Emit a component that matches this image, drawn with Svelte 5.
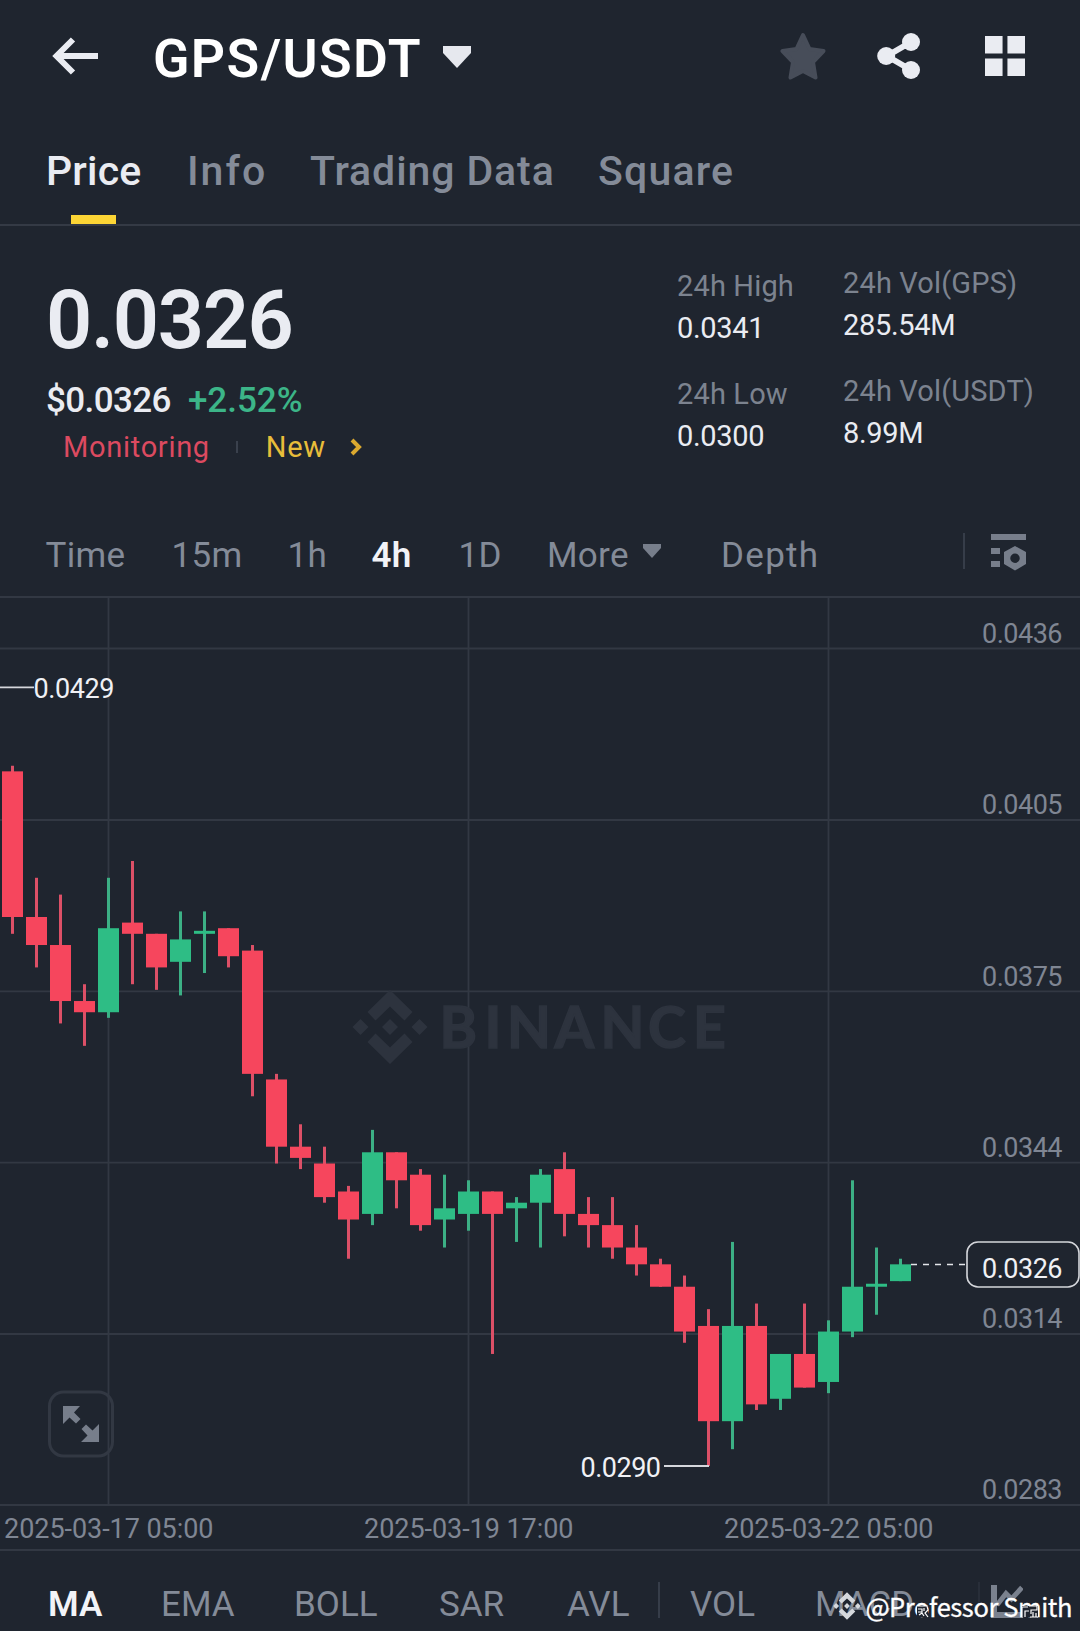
<script>
let activeTab = 'Price'
let activePeriod = '4h'
let activeIndicator = 'MA'

const tabs = ['Price', 'Info', 'Trading Data', 'Square']
const periods = ['Time', '15m', '1h', '4h', '1D']
const indicators = ['MA', 'EMA', 'BOLL', 'SAR', 'AVL']
const subIndicators = ['VOL', 'MACD']

const stats = [
    [
        { label: '24h High', value: '0.0341' },
        { label: '24h Low', value: '0.0300' }
    ],
    [
        { label: '24h Vol(GPS)', value: '285.54M' },
        { label: '24h Vol(USDT)', value: '8.99M' }
    ]
]

const gridRows = [
    { y: 50.5, label: '0.0436' },
    { y: 222, label: '0.0405' },
    { y: 393.3, label: '0.0375' },
    { y: 564.6, label: '0.0344' },
    { y: 736, label: '0.0314' },
    { y: 907, label: '0.0283' }
]

const gridCols = [
    { x: 108.5, label: '2025-03-17 05:00' },
    { x: 468.5, label: '2025-03-19 17:00' },
    { x: 828.5, label: '2025-03-22 05:00' }
]

// [open, high, low, close] in ticks of 0.0001
const candles = [
    [414, 415, 385, 388],
    [388, 395, 379, 383],
    [383, 392, 369, 373],
    [373, 376, 365, 371],
    [371, 395, 370, 386],
    [387, 398, 376, 385],
    [385, 385, 375, 379],
    [380, 389, 374, 384],
    [385, 389, 378, 385],
    [386, 386, 379, 381],
    [382, 383, 356, 360],
    [359, 360, 344, 347],
    [347, 351, 343, 345],
    [344, 347, 337, 338],
    [339, 340, 327, 334],
    [335, 350, 333, 346],
    [346, 346, 336, 341],
    [342, 343, 332, 333],
    [334, 342, 329, 336],
    [335, 341, 332, 339],
    [339, 339, 310, 335],
    [336, 338, 330, 337],
    [337, 343, 329, 342],
    [343, 346, 331, 335],
    [335, 338, 329, 333],
    [333, 338, 327, 329],
    [329, 333, 324, 326],
    [326, 327, 322, 322],
    [322, 324, 312, 314],
    [315, 318, 290, 298],
    [298, 330, 293, 315],
    [315, 319, 300, 301],
    [302, 310, 300, 310],
    [310, 319, 304, 304],
    [305, 316, 303, 314],
    [314, 341, 313, 322],
    [322, 329, 317, 322],
    [323, 327, 323, 326]
]

const yOf = (tick) => 868 - (tick - 290) * 5.602

const bars = candles.map(([open, high, low, close], i) => {
    const bottom = yOf(Math.min(open, close))
    const height = Math.max(3, bottom - yOf(Math.max(open, close)))
    return {
        x: 12.5 + i * 24,
        top: bottom - height,
        height,
        high: yOf(high),
        low: yOf(low),
        up: close >= open
    }
})
</script>

<style>
:global(body) {
    background: #1f252f;
}

.app {
    position: relative;
    width: 1080px;
    height: 1631px;
    overflow: hidden;
    background: #1f252f;
    color: #eaecf2;
    font-family: Roboto, 'Noto Sans', sans-serif;
}

svg {
    display: block;
    flex: none;
}

button {
    padding: 0;
    border: none;
    background: none;
    color: #848b98;
    font: inherit;
    letter-spacing: inherit;
    text-align: left;
    white-space: nowrap;
}

.header {
    box-sizing: border-box;
    height: 112px;
    padding: 0 55px 0 52px;
    display: flex;
    align-items: center;
}

h1 {
    margin: 0 0 0 54px;
    padding-top: 5px;
    color: #fff;
    font-size: 53.5px;
    font-weight: 600;
    line-height: 60px;
    letter-spacing: 1.4px;
}

.header .caret {
    margin: 2px 0 0 21px;
}

.actions {
    margin-left: auto;
    display: flex;
    align-items: center;
}

.tabs {
    box-sizing: border-box;
    height: 114px;
    padding: 6px 0 0 46px;
    display: grid;
    grid-template-columns: 141px 123px 288px auto;
    justify-content: start;
    border-bottom: 2px solid #343a45;
    font-size: 41px;
    font-weight: 500;
    letter-spacing: 0.9px;
}

.tabs button {
    position: relative;
}

.tabs button:nth-child(2) {
    letter-spacing: 2px;
}

.tabs button:last-child {
    letter-spacing: 1.2px;
}

.tabs button.active {
    color: #eaecf2;
    letter-spacing: 0.2px;
}

.tabs button.active::after {
    content: '';
    position: absolute;
    left: 25px;
    bottom: 0;
    width: 45px;
    height: 9px;
    background: #fcd535;
}

.summary {
    box-sizing: border-box;
    height: 286px;
    display: grid;
    grid-template-columns: 631px 166px auto;
    padding-left: 46px;
}

.last {
    margin-top: 50px;
    font-size: 81px;
    font-weight: 600;
    line-height: 90px;
    letter-spacing: -1.3px;
}

.fiat {
    margin-top: 15px;
    display: flex;
    gap: 17px;
    font-size: 35px;
    font-weight: 500;
    line-height: 40px;
    letter-spacing: -0.6px;
}

.fiat .up {
    color: #3cb588;
    letter-spacing: 0;
}

.tags {
    margin-top: 6px;
    padding-left: 17px;
    display: flex;
    align-items: center;
    font-size: 29px;
    line-height: 40px;
    letter-spacing: 0.7px;
}

.monitoring {
    color: #dc4a60;
}

.tags .bar {
    width: 2px;
    height: 12px;
    margin: 0 28px 0 26px;
    background: #3a414d;
}

.new {
    margin-right: 24px;
    color: #e8bd3a;
}

dl {
    margin: 0;
    padding-top: 39px;
    font-size: 29px;
    line-height: 42px;
}

dl + dl {
    padding-top: 36px;
}

dt {
    color: #7c838f;
    letter-spacing: 0.15px;
    white-space: nowrap;
}

dd {
    margin: 0 0 24px;
    letter-spacing: -0.3px;
}

.periods {
    box-sizing: border-box;
    height: 86px;
    padding: 2px 54px 0 45.5px;
    display: flex;
    align-items: center;
    border-bottom: 2px solid #323843;
    font-size: 35px;
    letter-spacing: 0.3px;
}

.period-list {
    display: grid;
    grid-template-columns: 126px 116px 84px 87px 88.5px 174px auto;
}

.period-list .more {
    display: flex;
    align-items: center;
    gap: 14px;
}

.period-list .more svg {
    margin-top: -8px;
}

.period-list button:last-child {
    letter-spacing: 1.3px;
}

.periods .active,
.indicators .active {
    color: #f2f3f7;
    font-weight: 600;
}

.divider {
    width: 2px;
    height: 36px;
    background: #363d49;
}

.periods .divider {
    margin: -8px 26px 0 auto;
}

.periods .settings {
    margin-top: -6px;
}

.chart {
    font-size: 27px;
}

.grid {
    stroke: #323843;
    stroke-width: 1.8;
}

.axis {
    fill: #7f8693;
}

.marker {
    fill: #f0f1f5;
}

.leader {
    stroke: #d5d7dc;
    stroke-width: 1.8;
}

.brand {
    fill: #2d333e;
    font-family: Lato, sans-serif;
    font-size: 57px;
    font-weight: 700;
}

.bar-up .body { fill: #2ebd85; }
.bar-up .wick { fill: #3cb085; }
.bar-down .body { fill: #f6465d; }
.bar-down .wick { fill: #dc5067; }

.indicators {
    padding: 34px 0 0 48px;
    display: grid;
    grid-template-columns: 113px 133px 145px 128px 91px 32px 125px 163px 13px auto;
    font-size: 35px;
    line-height: 40px;
}

.indicators .divider {
    margin-top: -3px;
}

.indicators .faint {
    opacity: 0.4;
}

/* author stamp lies over the indicator row */
.stamp {
    position: absolute;
    right: 8px;
    bottom: 7px;
    display: flex;
    align-items: center;
    gap: 4px;
    color: #fff;
    font-family: 'Noto Sans CJK SC', 'Noto Sans', sans-serif;
    font-size: 25.5px;
    line-height: 36px;
    letter-spacing: -0.42px;
    -webkit-text-stroke: 0.3px #fff;
}

.seal {
    position: absolute;
    top: 17px;
}
</style>

<div class="app">
    <div class="header">
        <svg width="47" height="38" viewBox="0 0 47 38" fill="none" stroke="#eaecf2" stroke-width="6">
            <path d="M46 19H5M21 2.5 4.500 19 21 35.500" />
        </svg>
        <h1>GPS/USDT</h1>
        <svg class="caret" width="28" height="22" viewBox="0 0 28 22" fill="#e6e8ee">
            <path d="M0 0H28V7L14 22 0 7Z" />
        </svg>
        <div class="actions">
            <svg width="46" height="48" viewBox="0 0 46 48" fill="#474d59" stroke="#474d59" stroke-width="4" stroke-linejoin="round" style:margin-right="51px">
                <path d="M23 3 29.500 17 43.500 19 33 30 35.500 45.500 23 39 10.500 45.500 13 30 2.500 19 16.500 17Z" />
            </svg>
            <svg width="43" height="48" viewBox="0 0 43 48" fill="#eaecf2" style:margin-right="65px">
                <path d="M34 10 10 24 34 38" fill="none" stroke="#eaecf2" stroke-width="6" />
                <circle cx="34" cy="10" r="9" />
                <circle cx="9.200" cy="24" r="9" />
                <circle cx="34" cy="38" r="9" />
            </svg>
            <svg width="40" height="40" viewBox="0 0 41 41" fill="#eaecf2">
                <path d="M0 0H18V18H0ZM23 0H41V18H23ZM0 23H18V41H0ZM23 23H41V41H23Z" />
            </svg>
        </div>
    </div>

    <div class="tabs">
        {#each tabs as tab}
            <button class:active={tab === activeTab} on:click={() => activeTab = tab}>{tab}</button>
        {/each}
    </div>

    <div class="summary">
        <div>
            <div class="last">0.0326</div>
            <div class="fiat">
                <span>$0.0326</span>
                <span class="up">+2.52%</span>
            </div>
            <div class="tags">
                <span class="monitoring">Monitoring</span>
                <span class="bar"></span>
                <span class="new">New</span>
                <svg width="13" height="18" viewBox="0 0 13 18" fill="none" stroke="#dba92f" stroke-width="4">
                    <path d="M2 2 9 9 2 16" />
                </svg>
            </div>
        </div>
        {#each stats as column}
            <dl>
                {#each column as stat}
                    <dt>{stat.label}</dt>
                    <dd>{stat.value}</dd>
                {/each}
            </dl>
        {/each}
    </div>

    <div class="periods">
        <div class="period-list">
            {#each periods as period}
                <button class:active={period === activePeriod} on:click={() => activePeriod = period}>{period}</button>
            {/each}
            <button class="more">
                More
                <svg width="18" height="14" viewBox="0 0 18 14" fill="#777e8b">
                    <path d="M0 0H18V4L9 14 0 4Z" />
                </svg>
            </button>
            <button>Depth</button>
        </div>
        <span class="divider"></span>
        <svg class="settings" width="35" height="37" viewBox="0 0 35 37" fill="#777e8b">
            <path d="M0 0H35V6H0ZM0 14H9V20H0ZM0 27H9V33H0Z" />
            <path fill-rule="evenodd" d="M24 12 35 18V30L24 36.500 13 30V18ZM24 19.500A4.700 4.700 0 1 0 24 29 4.700 4.700 0 1 0 24 19.500Z" />
        </svg>
    </div>

    <svg class="chart" width="1080" height="953" viewBox="0 0 1080 953">
        <g class="grid">
            {#each gridCols as col}
                <line x1={col.x} x2={col.x} y1="0" y2="907" />
            {/each}
            {#each gridRows as row}
                <line x1="0" x2="1080" y1={row.y} y2={row.y} />
            {/each}
            <line x1="0" x2="1080" y1="952" y2="952" />
        </g>

        <g class="brand">
            <g transform="translate(390 429)">
                <path d="M0-37 22.500-15 14.500-6.500 0-20.500-14.500-6.500-22.500-15ZM0 37 22.500 15 14.500 6.500 0 20.500-14.500 6.500-22.500 15Z" />
                <path d="M0-8 8 0 0 8-8 0ZM-29.500-8-21.500 0-29.500 8-37.500 0ZM29.500-8 37.500 0 29.500 8 21.500 0Z" />
            </g>
            <text stroke="#2d333e" stroke-width="1.500" x="439.500 484.500 507 554.500 600.500 648 693" y="450">BINANCE</text>
        </g>

        {#each bars as bar}
            <g class={bar.up ? 'bar-up' : 'bar-down'}>
                <rect class="wick" x={bar.x - 1.5} y={bar.high} width="3" height={bar.low - bar.high} />
                <rect class="body" x={bar.x - 10.5} y={bar.top} width="21" height={bar.height} />
            </g>
        {/each}

        <g class="axis">
            {#each gridRows as row}
                <text x="982" y={row.y - 5.8} textLength="80.500">{row.label}</text>
            {/each}
            {#each gridCols as col}
                <text x={col.x - 104.5} y="940" textLength="209.500">{col.label}</text>
            {/each}
        </g>

        <line class="leader" x1="0" x2="34" y1="89.300" y2="89.300" />
        <text class="marker" x="33.500" y="100" textLength="81">0.0429</text>
        <line class="leader" x1="664" x2="709" y1="868" y2="868" />
        <text class="marker" x="580.500" y="879" textLength="80.500">0.0290</text>

        <line x1="911" x2="965" y1="666.500" y2="666.500" stroke="#e4e6ea" stroke-width="1.500" stroke-dasharray="6 6" />
        <rect x="967" y="644" width="112" height="45" rx="11" fill="#1f252f" stroke="#d5d7dc" stroke-width="1.600" />
        <text class="marker" x="982" y="680" textLength="80.500">0.0326</text>

        <rect x="49.500" y="794" width="63" height="64" rx="14" fill="none" stroke="#323843" stroke-width="3" />
        <g fill="#777e8b">
            <path d="M63 808H80L74 814.500 80.500 821 76 825.500 69.500 819.500 63 826Z" />
            <path d="M99 844H81L87.500 837.500 81.500 831 86 826.500 92.500 832.500 99 826Z" />
        </g>
    </svg>

    <div class="indicators">
        {#each indicators as name}
            <button class:active={name === activeIndicator} on:click={() => activeIndicator = name}>{name}</button>
        {/each}
        <span class="divider"></span>
        {#each subIndicators as name}
            <button on:click={() => activeIndicator = name}>{name}</button>
        {/each}
        <span class="divider faint"></span>
        <svg width="32" height="33" viewBox="0 0 32 33" fill="none" stroke="#7a818e">
            <path d="M3 0V30H32" stroke-width="6" />
            <path d="M6 20 15 8.500 20.500 14 31 2.500" stroke-width="5" />
        </svg>
    </div>

    <div class="stamp">
        <svg width="28" height="28" viewBox="-38 -38 76 76" fill="#d5d8dc">
            <path d="M0-37 22.500-15 14.500-6.500 0-20.500-14.500-6.500-22.500-15ZM0 37 22.500 15 14.500 6.500 0 20.500-14.500 6.500-22.500 15Z" />
            <path d="M0-8 8 0 0 8-8 0ZM-29.500-8-21.500 0-29.500 8-37.500 0ZM29.500-8 37.500 0 29.500 8 21.500 0Z" />
        </svg>
        <span>@Professor Smith</span>
        <svg class="seal" style:right="143px" width="13" height="13" viewBox="0 0 13 13" fill="none" stroke="#fff" stroke-width="1.200">
            <rect x="1" y="1" width="11" height="11" fill="#1f252f" stroke="none" />
            <path d="M1 1H11L12 5 9 8 12 12M2 4H6V7H2M8 3V6M3 10 6 8 8 11" />
        </svg>
        <svg class="seal" style:right="33px" width="18" height="13" viewBox="0 0 18 13" fill="none" stroke="#fff" stroke-width="1.200">
            <rect x="1" y="1" width="16" height="11" fill="#1f252f" stroke="none" />
            <path d="M1 12V2H7M4 12V6H8M8 1H16V5H10V9M12 7V12M9 12H17M15 8V12" />
        </svg>
    </div>
</div>
